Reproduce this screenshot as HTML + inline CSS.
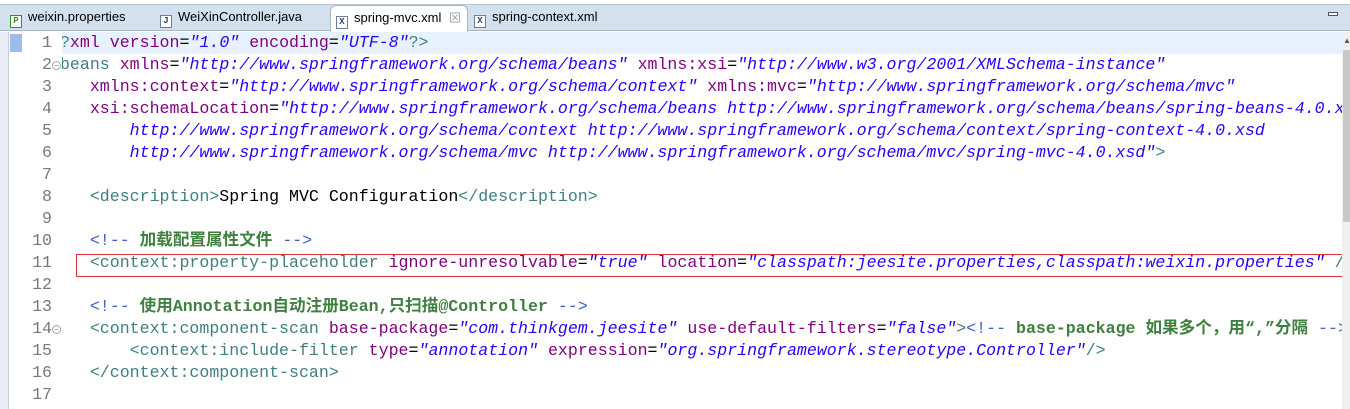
<!DOCTYPE html>
<html><head><meta charset="utf-8"><style>
*{margin:0;padding:0;box-sizing:border-box}
body{width:1350px;height:409px;overflow:hidden;background:#fff;position:relative;font-family:"Liberation Sans","Noto Sans CJK SC",sans-serif}
#top{position:absolute;left:0;top:0;width:1350px;height:5px;background:#fff;border-bottom:1px solid #b8c2cf}
#bar{position:absolute;left:0;top:5px;width:1350px;height:26px;background:#d3e1ef;border-bottom:1px solid #aab6c6}
.tab{position:absolute;top:6px;height:24px;font-size:13px;line-height:22px;color:#000;white-space:nowrap}
.ic{display:inline-block;width:12px;height:13px;border:1px solid #6a7fa0;font:bold 9px "Liberation Mono",monospace;line-height:11px;text-align:center;vertical-align:-2px;margin-right:6px;background:#fff;color:#2a3f6a}
#act{left:330px;width:138px;background:#fff;border:1px solid #aab6c6;border-bottom:none;border-radius:6px 6px 0 0;padding-left:5px;top:5px;height:27px;line-height:24px}
#ed{position:absolute;left:0;top:32px;width:1350px;height:377px}
#lmark{position:absolute;left:0;top:0;width:9px;height:377px;background:#e9ecf4;border-right:1px solid #c8cde0}
#hl{position:absolute;left:62px;top:0;width:1280px;height:22px;background:#e8f2fe}
#sb{position:absolute;left:1342px;top:0;width:8px;height:377px;background:#f0f0f0}
#thumb{position:absolute;left:1343px;top:18px;width:7px;height:172px;background:#c8c8c8}
.ln{position:absolute;left:10px;width:42px;text-align:right;font:16.6px "Liberation Mono",monospace;color:#787878;line-height:22px}
#code{position:absolute;left:62px;top:0;width:1280px;height:377px;overflow:hidden}
.l{position:absolute;left:-12px;white-space:pre;font:16.6px "Liberation Mono","Noto Sans CJK SC",monospace;line-height:22px}
.t{color:#3f7f7f}.a{color:#7f007f}.v{color:#2a00ff;font-style:italic}.c{color:#3f5fbf}.g{color:#3f7f3f;font-weight:bold}.k{color:#000}
#red{position:absolute;left:76px;top:222px;width:1267px;height:23px;border:1px solid #e0303a}
.fold{position:absolute;left:52px;width:9px;height:9px;border:1px solid #9aa;border-radius:50%;font-size:8px;line-height:7px;text-align:center;color:#777}
</style></head><body>
<div id="top"></div>
<div id="bar"></div>
<div class="tab" style="left:10px"><span class="ic" style="color:#3a8a3a;border-color:#3a8a3a">P</span>weixin.properties</div>
<div class="tab" style="left:160px"><span class="ic">J</span>WeiXinController.java</div>
<div class="tab" id="act"><span class="ic">X</span>spring-mvc.xml <span style="color:#999;font-size:12px;margin-left:4px">⊠</span></div>
<div class="tab" style="left:474px"><span class="ic">X</span>spring-context.xml</div>
<div style="position:absolute;left:1328px;top:12px;width:10px;height:4px;border:1px solid #555;background:#fff"></div>
<div id="ed">
<div id="lmark"></div>
<div style="position:absolute;left:10px;top:2px;width:12px;height:18px;background:#5b8fd8;opacity:.6"></div>
<div id="hl"></div>
<div class="ln" style="top:0">1</div><div class="ln" style="top:22px">2</div><div class="ln" style="top:44px">3</div><div class="ln" style="top:66px">4</div><div class="ln" style="top:88px">5</div><div class="ln" style="top:110px">6</div><div class="ln" style="top:132px">7</div><div class="ln" style="top:154px">8</div><div class="ln" style="top:176px">9</div><div class="ln" style="top:198px">10</div><div class="ln" style="top:220px">11</div><div class="ln" style="top:242px">12</div><div class="ln" style="top:264px">13</div><div class="ln" style="top:286px">14</div><div class="ln" style="top:308px">15</div><div class="ln" style="top:330px">16</div><div class="ln" style="top:352px">17</div>
<div class="fold" style="top:29px">−</div><div class="fold" style="top:293px">−</div>
<div id="code">
<div class="l" style="top:0"><span class="t">&lt;?</span><span class="a">xml</span> <span class="a">version</span>=<span class="v">"1.0"</span> <span class="a">encoding</span>=<span class="v">"UTF-8"</span><span class="t">?&gt;</span></div>
<div class="l" style="top:22px"><span class="t">&lt;beans</span> <span class="a">xmlns</span>=<span class="v">"http://www.springframework.org/schema/beans"</span> <span class="a">xmlns:xsi</span>=<span class="v">"http://www.w3.org/2001/XMLSchema-instance"</span></div>
<div class="l" style="top:44px">    <span class="a">xmlns:context</span>=<span class="v">"http://www.springframework.org/schema/context"</span> <span class="a">xmlns:mvc</span>=<span class="v">"http://www.springframework.org/schema/mvc"</span></div>
<div class="l" style="top:66px">    <span class="a">xsi:schemaLocation</span>=<span class="v">"http://www.springframework.org/schema/beans http://www.springframework.org/schema/beans/spring-beans-4.0.xsd</span></div>
<div class="l" style="top:88px"><span class="v">        http://www.springframework.org/schema/context http://www.springframework.org/schema/context/spring-context-4.0.xsd</span></div>
<div class="l" style="top:110px"><span class="v">        http://www.springframework.org/schema/mvc http://www.springframework.org/schema/mvc/spring-mvc-4.0.xsd"</span><span class="t">&gt;</span></div>
<div class="l" style="top:154px">    <span class="t">&lt;description&gt;</span><span class="k">Spring MVC Configuration</span><span class="t">&lt;/description&gt;</span></div>
<div class="l" style="top:198px">    <span class="c">&lt;!-- </span><span class="g">加载配置属性文件</span><span class="c"> --&gt;</span></div>
<div class="l" style="top:220px">    <span class="t">&lt;context:property-placeholder</span> <span class="a">ignore-unresolvable</span>=<span class="v">"true"</span> <span class="a">location</span>=<span class="v">"classpath:jeesite.properties,classpath:weixin.properties"</span> <span class="t">/&gt;</span></div>
<div class="l" style="top:264px">    <span class="c">&lt;!-- </span><span class="g">使用Annotation自动注册Bean,只扫描@Controller</span><span class="c"> --&gt;</span></div>
<div class="l" style="top:286px">    <span class="t">&lt;context:component-scan</span> <span class="a">base-package</span>=<span class="v">"com.thinkgem.jeesite"</span> <span class="a">use-default-filters</span>=<span class="v">"false"</span><span class="t">&gt;</span><span class="c">&lt;!-- </span><span class="g">base-package 如果多个，用“,”分隔</span><span class="c"> --&gt;</span></div>
<div class="l" style="top:308px">        <span class="t">&lt;context:include-filter</span> <span class="a">type</span>=<span class="v">"annotation"</span> <span class="a">expression</span>=<span class="v">"org.springframework.stereotype.Controller"</span><span class="t">/&gt;</span></div>
<div class="l" style="top:330px">    <span class="t">&lt;/context:component-scan&gt;</span></div>
</div>
<div id="red"></div>
<div id="sb"></div><div id="thumb"></div>
<div style="position:absolute;left:1343px;top:4px;font-size:8px;color:#555">▲</div>
</div>
</body></html>
